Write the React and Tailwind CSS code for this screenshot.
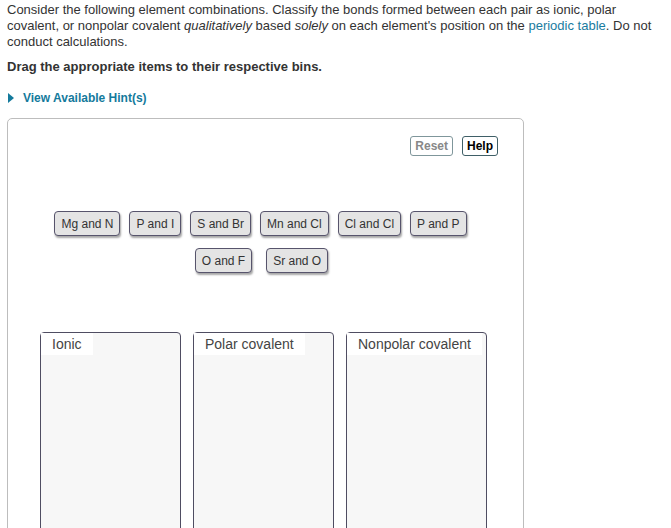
import React from 'react';

const items1 = ['Mg and N', 'P and I', 'S and Br', 'Mn and Cl', 'Cl and Cl', 'P and P'];
const items2 = ['O and F', 'Sr and O'];
const bins = ['Ionic', 'Polar covalent', 'Nonpolar covalent'];

const Item = ({ label }) => (
  <div className="h-[25px] px-[6px] flex items-center bg-[#e4e4e4] border border-[#57546c] rounded-[4px] shadow-[1px_2px_2px_rgba(0,0,0,0.35)] text-[12px] text-[#333]">
    {label}
  </div>
);

const Bin = ({ label }) => (
  <div className="w-[141px] h-[220px] bg-[#f7f7f7] border border-[#4f4d62] rounded-[4px] flex flex-col items-start">
    <div className="bg-white px-[11px] h-[22px] flex items-center text-[14px] text-[#444]">{label}</div>
  </div>
);

export default function App() {
  return (
    <div className="px-[7px] pt-[2px] font-['Liberation_Sans',Arial,sans-serif] text-[13px] leading-4 text-[#333] bg-white h-[528px] overflow-hidden">
      <p>
        Consider the following element combinations. Classify the bonds formed between each pair as ionic, polar
        covalent, or nonpolar covalent <i>qualitatively</i> based <i>solely</i> on each element's position on the{' '}
        <span className="text-[#1a7ca0]">periodic table</span>. Do not conduct calculations.
      </p>
      <p className="mt-[9px] font-bold">Drag the appropriate items to their respective bins.</p>
      <div className="mt-[15px] flex items-center gap-[9px] text-[12px] font-bold text-[#147a9c]">
        <svg width="6" height="10" viewBox="0 0 6 10" className="ml-[1px]">
          <path d="M0 0 L6 5 L0 10 Z" fill="#147a9c" />
        </svg>
        <span>View Available Hint(s)</span>
      </div>
      <div className="mt-[12px] w-[517px] h-[430px] border border-[#bdbdbd] rounded-[5px]">
        <div className="flex justify-end gap-[9px] pt-[17px] pr-[25px]">
          <div className="h-[20px] px-[4px] flex items-center border border-[#7f969b] rounded-[3px] text-[12px] font-bold text-[#888]">Reset</div>
          <div className="h-[20px] px-[4px] flex items-center border border-[#3f5f67] rounded-[3px] text-[12px] font-bold text-black">Help</div>
        </div>
        <div className="mt-[55px] flex justify-center gap-x-[9px] pr-[10px]">
          {items1.map((t) => <Item key={t} label={t} />)}
        </div>
        <div className="mt-[12px] flex justify-center gap-x-[14px] pr-[8px]">
          {items2.map((t) => <Item key={t} label={t} />)}
        </div>
        <div className="mt-[59px] flex justify-center gap-[12px] pr-[4px]">
          {bins.map((b) => <Bin key={b} label={b} />)}
        </div>
      </div>
    </div>
  );
}
